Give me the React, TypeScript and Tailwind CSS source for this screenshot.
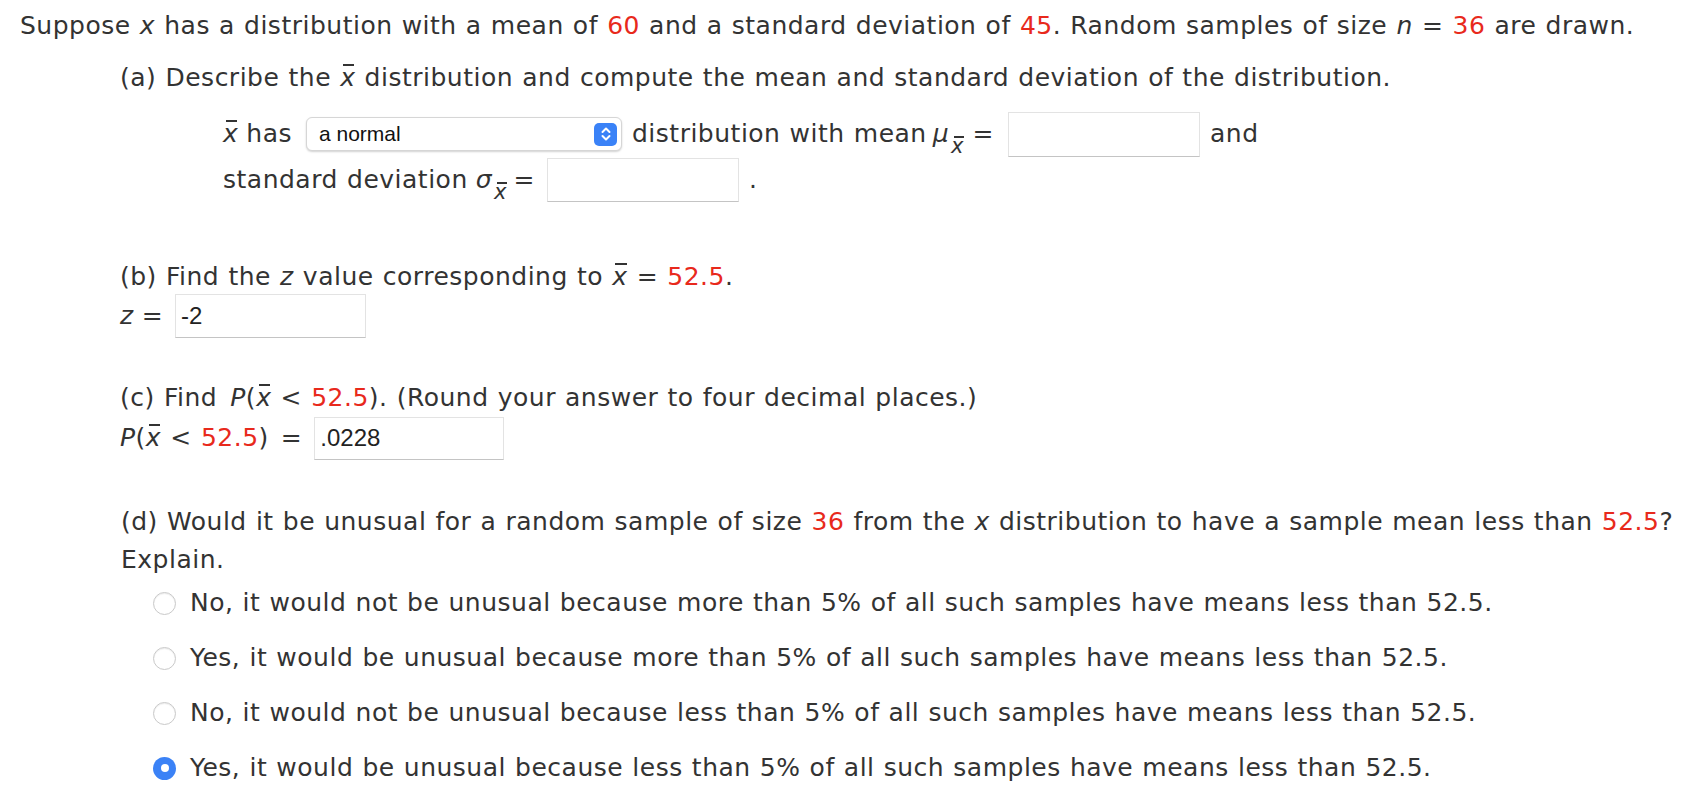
import type { ReactNode } from 'react'

const Red = ({ children }: { children: ReactNode }) => (
  <span className="text-[#e8291c]">{children}</span>
)

// x with a bar over it
const XBar = () => (
  <span className="relative inline-block italic">
    x
    <span className="absolute left-[3px] right-[1px] top-[1px] h-[2px] bg-[#333]" />
  </span>
)

// subscript x-bar used by mu and sigma (a flex item, so it is shifted down by top)
const SubXBar = () => (
  <span className="relative top-[12px] ml-[2px] inline-block text-[21px] italic leading-none tracking-normal">
    x
    <span className="absolute left-[3px] right-0 top-0 h-[2px] bg-[#333]" />
  </span>
)

const Field = ({ value, className }: { value?: string; className: string }) => (
  <div
    className={`flex items-center border border-[#e3e3e3] border-b-[#c4c4c4] bg-white px-[5px] font-['Liberation_Sans',Arial,sans-serif] text-[24px] tracking-normal text-[#222] ${className}`}
  >
    {value}
  </div>
)

const Radio = ({ checked }: { checked?: boolean }) =>
  checked ? (
    <span className="flex h-[23px] w-[23px] shrink-0 items-center justify-center rounded-full bg-[#3b82f6]">
      <span className="h-[8px] w-[8px] rounded-full bg-white" />
    </span>
  ) : (
    <span className="h-[23px] w-[23px] shrink-0 rounded-full border border-[#c9c9c9] bg-white shadow-[inset_0_1px_1px_rgba(0,0,0,0.08)]" />
  )

const options = [
  { text: 'No, it would not be unusual because more than 5% of all such samples have means less than 52.5.', checked: false },
  { text: 'Yes, it would be unusual because more than 5% of all such samples have means less than 52.5.', checked: false },
  { text: 'No, it would not be unusual because less than 5% of all such samples have means less than 52.5.', checked: false },
  { text: 'Yes, it would be unusual because less than 5% of all such samples have means less than 52.5.', checked: true },
]

export default function App() {
  return (
    <div className="min-h-screen bg-white pl-[20px] pt-[11px] font-['DejaVu_Sans',Verdana,sans-serif] text-[25px] leading-[30px] tracking-[0.5px] text-[#333] [word-spacing:0.7px]">
      {/* problem statement */}
      <p>
        Suppose <i>x</i> has a distribution with a mean of <Red>60</Red> and a standard deviation of{' '}
        <Red>45</Red>. Random samples of size <i>n</i> = <Red>36</Red> are drawn.
      </p>

      {/* part a */}
      <div className="pl-[100px] pt-[22px]">
        <p>
          (a) Describe the <XBar /> distribution and compute the mean and standard deviation of the distribution.
        </p>
        <div className="pl-[103px]">
          <div className="mt-[18px] flex h-[46px] items-center">
            <XBar />
            <span className="ml-[8px]">has</span>
            <div className="ml-[14px] flex h-[34px] w-[316px] items-center rounded-[6px] border border-[#d6d6d6] bg-white pl-[12px] pr-[4px] font-['Liberation_Sans',Arial,sans-serif] text-[21px] tracking-normal text-[#111] shadow-[0_1px_2px_rgba(0,0,0,0.18)] [word-spacing:0px]">
              <span className="flex-1">a normal</span>
              <span className="flex h-[23px] w-[23px] items-center justify-center rounded-[5px] bg-[#3a82f7]">
                <svg width="12" height="16" viewBox="0 0 12 16" fill="none" stroke="white" strokeWidth="2" strokeLinecap="round" strokeLinejoin="round">
                  <path d="M2.5 6 6 2.5 9.5 6" />
                  <path d="M2.5 10 6 13.5 9.5 10" />
                </svg>
              </span>
            </div>
            <span className="ml-[10px]">distribution with mean</span>
            <span className="ml-[6px] italic">μ</span>
            <SubXBar />
            <span className="ml-[9px]">=</span>
            <Field className="ml-[14px] h-[45px] w-[192px]" />
            <span className="ml-[10px]">and</span>
          </div>
          <div className="flex h-[46px] items-center">
            <span>standard deviation</span>
            <span className="ml-[8px] italic">σ</span>
            <SubXBar />
            <span className="ml-[7px]">=</span>
            <Field className="ml-[12px] h-[44px] w-[192px]" />
            <span className="ml-[10px]">.</span>
          </div>
        </div>
      </div>

      {/* part b */}
      <div className="pl-[100px] pt-[59px]">
        <p>
          (b) Find the <i>z</i> value corresponding to <XBar /> = <Red>52.5</Red>.
        </p>
        <div className="mt-[1px] flex h-[46px] items-center">
          <i>z</i>
          <span className="ml-[8px]">=</span>
          <Field value="-2" className="ml-[12px] h-[44px] w-[191px]" />
        </div>
      </div>

      {/* part c */}
      <div className="pl-[100px] pt-[44px]">
        <p>
          (c) Find <i className="ml-[4px]">P</i>(<XBar /> &lt; <Red>52.5</Red>). (Round your answer to four decimal
          places.)
        </p>
        <div className="mt-[2px] flex h-[46px] items-center">
          <span>
            <i>P</i>(<XBar /> &lt; <Red>52.5</Red>)
          </span>
          <span className="ml-[12px]">=</span>
          <Field value=".0228" className="ml-[12px] h-[43px] w-[190px]" />
        </div>
      </div>

      {/* part d */}
      <div className="pl-[101px] pt-[42px]">
        <p className="leading-[38px]">
          (d) Would it be unusual for a random sample of size <Red>36</Red> from the <i>x</i> distribution to have a
          sample mean less than <Red>52.5</Red>?
          <br />
          Explain.
        </p>
        <div className="mt-[4px] flex flex-col gap-[15px] pl-[32px]">
          {options.map((o, i) => (
            <label key={i} className="flex h-[40px] items-center gap-[14px]">
              <Radio checked={o.checked} />
              <span>{o.text}</span>
            </label>
          ))}
        </div>
      </div>
    </div>
  )
}
